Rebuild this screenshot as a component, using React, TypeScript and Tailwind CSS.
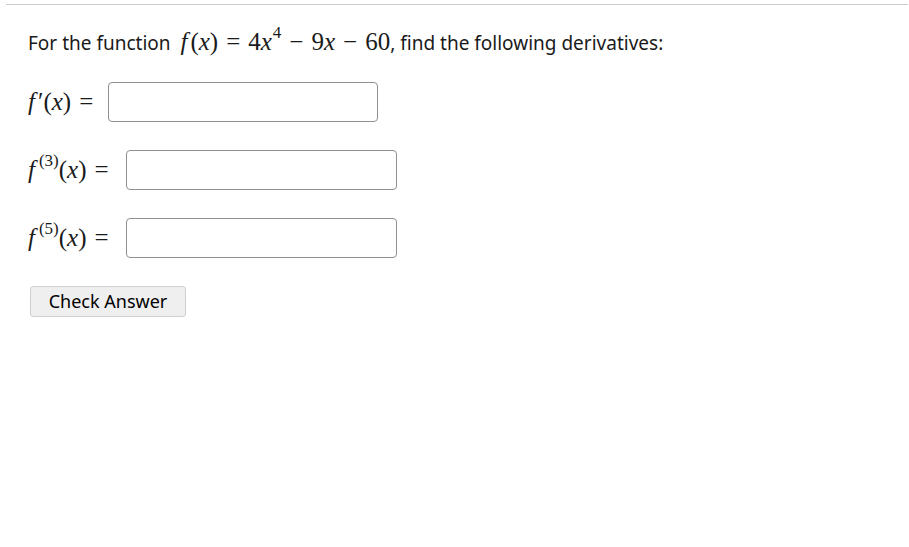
import React from "react";

// italic math variable, with a little italic correction after it
const V = ({ children, c = false }: { children: React.ReactNode; c?: boolean }) => (
  <span className={`italic ${c ? "pr-[3px]" : ""}`}>{children}</span>
);

const Rel = ({ children }: { children: React.ReactNode }) => (
  <span className="mx-[8px]">{children}</span>
);

const Bin = ({ children }: { children: React.ReactNode }) => (
  <span className="mx-[8px]">{children}</span>
);

const Math = ({ children }: { children: React.ReactNode }) => (
  <span className="font-['Liberation_Serif','DejaVu_Serif',serif] text-[25px] whitespace-nowrap">
    {children}
  </span>
);

const Sup = ({ children }: { children: React.ReactNode }) => (
  <sup className="text-[17px] top-[-12px] pl-px">{children}</sup>
);

const Row = ({ label, inputClass }: { label: React.ReactNode; inputClass: string }) => (
  <div className="flex items-center h-[40px]">
    <Math>{label}</Math>
    <input
      type="text"
      className={`h-[40px] ${inputClass} rounded-[4px] border border-[#8f8f8f] bg-white outline-none`}
    />
  </div>
);

export default function App() {
  return (
    <div className="min-h-screen bg-white font-['Noto_Sans',sans-serif] text-[19px] text-[#1a1a1a]">
      <div className="pt-[4px] pl-[6px] pr-px">
        <div className="h-px bg-[#cccccc]" />
      </div>
      <div className="px-[28px]">
        <p className="mt-[18px] flex items-baseline">
          <span>For the function&nbsp;&nbsp;</span>
          <Math>
            <V c>f</V>(<V>x</V>)<Rel>=</Rel>4<V>x</V>
            <Sup>4</Sup>
            <Bin>−</Bin>9<V>x</V>
            <Bin>−</Bin>60
          </Math>
          <span>, find the following derivatives:</span>
        </p>
        <div className="mt-[21px] flex flex-col gap-[28px]">
          <Row
            label={
              <>
                <V c>f</V>′(<V>x</V>)<Rel>=</Rel>
              </>
            }
            inputClass="w-[270px] ml-[7px]"
          />
          <Row
            label={
              <>
                <V c>f</V>
                <Sup>(3)</Sup>(<V>x</V>)<Rel>=</Rel>
              </>
            }
            inputClass="w-[271px] ml-[9px]"
          />
          <Row
            label={
              <>
                <V c>f</V>
                <Sup>(5)</Sup>(<V>x</V>)<Rel>=</Rel>
              </>
            }
            inputClass="w-[271px] ml-[9px]"
          />
        </div>
        <button className="mt-[28px] ml-[2px] h-[31px] w-[156px] rounded-[3px] border border-[#d0d0d0] bg-[#efefef] text-[18px] text-black">
          Check Answer
        </button>
      </div>
    </div>
  );
}
